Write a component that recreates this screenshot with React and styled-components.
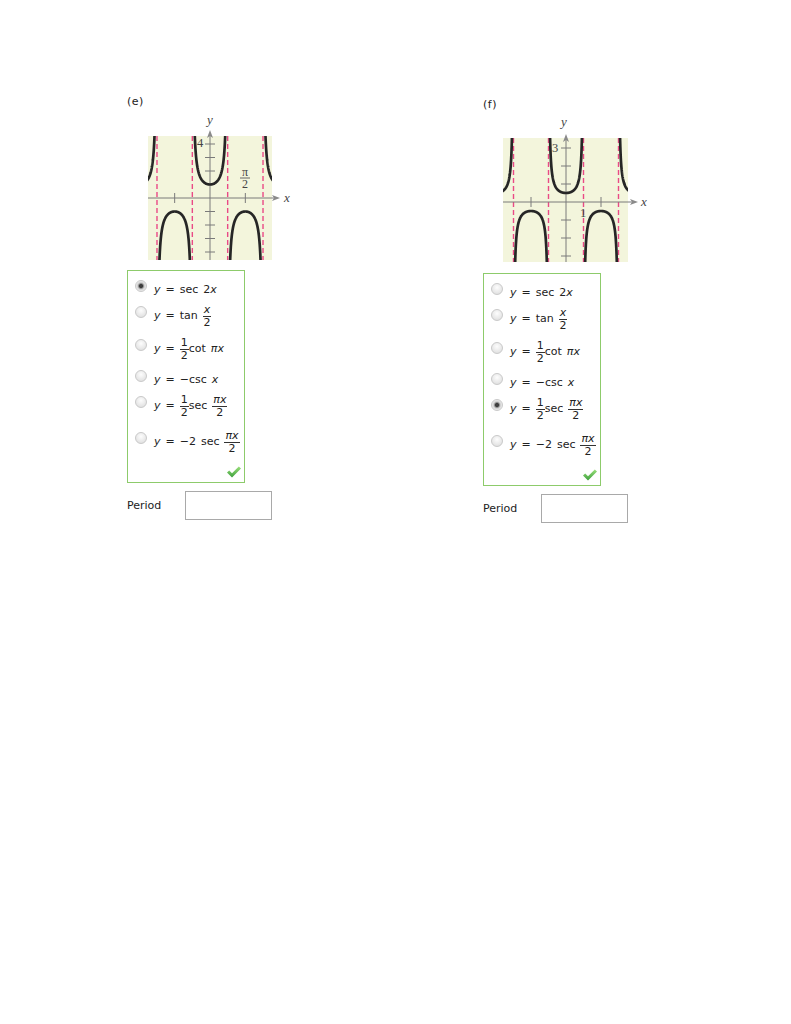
import React from "react";
import styled, { createGlobalStyle } from "styled-components";

const GlobalStyle = createGlobalStyle`
  body {
    margin: 0;
    background: #fff;
    font-family: "DejaVu Sans", Verdana, sans-serif;
    color: #222;
  }
`;

const Page = styled.div`
  display: grid;
  grid-template-columns: 356px 1fr;
  padding-left: 127px;
`;

const Column = styled.div`
  padding-top: ${(p) => p.$offset}px;
`;

const PartLabel = styled.div`
  font-size: 11px;
  line-height: 17px;
  height: 17px;
  letter-spacing: 0.5px;
`;

const GraphSvg = styled.svg`
  display: block;
  width: 170px;
  height: 150px;
  overflow: visible;
`;

const OptionsBox = styled.div`
  margin-top: 10px;
  width: 118px;
  height: 213px;
  box-sizing: border-box;
  border: 1px solid #8dcb6b;
  display: flex;
  flex-direction: column;
`;

const OptionRow = styled.label`
  display: flex;
  align-items: center;
  height: 24px;
  margin-top: ${(p) => p.$gap}px;
  padding-left: 7px;
  gap: 7px;
  font-size: 11px;
`;

const Radio = styled.span`
  flex: none;
  width: 12px;
  height: 12px;
  margin-bottom: 6px;
  box-sizing: border-box;
  border-radius: 50%;
  border: 1px solid #c9c9c9;
  background: ${(p) =>
    p.$checked
      ? "radial-gradient(circle, #3f3f3f 0 1.6px, #8a8a8a 2.4px, #cfcfcf 3.4px, #ececec 5px)"
      : "radial-gradient(circle at 50% 35%, #fdfdfd, #dadada)"};
`;

const Expr = styled.span`
  display: inline-flex;
  align-items: center;
  white-space: pre;
  line-height: 13px;
  word-spacing: 1.5px;
`;

const Var = styled.i`
  font-style: italic;
`;

const Frac = styled.span`
  display: inline-flex;
  flex-direction: column;
  align-items: center;
  line-height: 10px;
  margin-top: 3px;
`;

const Num = styled.span`
  padding: 0 1px 1px;
  border-bottom: 1px solid #333;
`;

const Den = styled.span`
  padding-top: 1px;
`;

const CheckRow = styled.div`
  display: flex;
  justify-content: flex-end;
  padding-right: 3px;
  margin-top: 13px;
`;

const PeriodRow = styled.div`
  display: flex;
  align-items: center;
  margin-top: 8px;
  font-size: 11px;
`;

const PeriodLabel = styled.span`
  width: 58px;
`;

const PeriodInput = styled.input`
  width: 87px;
  height: 29px;
  box-sizing: border-box;
  border: 1px solid #a9a9a9;
  margin: 0;
  padding: 0 4px;
  font: inherit;
`;

const SerifText = styled.text`
  font-family: "Liberation Serif", "Times New Roman", serif;
  fill: #444;
`;

function frac(n, d) {
  return (
    <Frac>
      <Num>{n}</Num>
      <Den>{d}</Den>
    </Frac>
  );
}

const options = [
  { id: "a", gap: 6, expr: <><Var>y</Var> = sec 2<Var>x</Var></> },
  { id: "b", gap: 2, expr: <><Var>y</Var> = tan {frac(<Var>x</Var>, "2")}</> },
  { id: "c", gap: 9, expr: <><Var>y</Var> = {frac("1", "2")}cot <Var>πx</Var></> },
  { id: "d", gap: 7, expr: <><Var>y</Var> = −csc <Var>x</Var></> },
  { id: "e", gap: 2, expr: <><Var>y</Var> = {frac("1", "2")}sec {frac(<Var>πx</Var>, "2")}</> },
  { id: "f", gap: 12, expr: <><Var>y</Var> = −2 sec {frac(<Var>πx</Var>, "2")}</> },
];

function buildCurves(spec) {
  const { box, origin, xu, yu, fn, asym } = spec;
  const xmin = (box.x - 4 - origin.x) / xu;
  const xmax = (box.x + box.w + 4 - origin.x) / xu;
  const lines = [];
  for (let k = -10; k <= 10; k++) {
    const a = asym.start + k * asym.step;
    if (a > xmin && a < xmax) lines.push(a);
  }
  const edges = [xmin, ...lines, xmax];
  const paths = [];
  for (let i = 0; i < edges.length - 1; i++) {
    const a = edges[i];
    const b = edges[i + 1];
    const pts = [];
    const N = 300;
    for (let j = 0; j < N; j++) {
      const t = a + ((b - a) * (j + 0.5)) / N;
      let Y = origin.y - fn(t) * yu;
      if (!isFinite(Y)) continue;
      Y = Math.max(box.y - 8, Math.min(box.y + box.h + 8, Y));
      pts.push(`${(origin.x + t * xu).toFixed(2)},${Y.toFixed(2)}`);
    }
    paths.push("M" + pts.join("L"));
  }
  return { paths, lines: lines.map((a) => origin.x + a * xu) };
}

const Graph = ({ spec }) => {
  const { id, box, origin, xu, yu, yTicks, xTicks, yTip, xTip, labels } = spec;
  const { paths, lines } = buildCurves(spec);
  return (
    <GraphSvg viewBox="0 0 170 150">
      <defs>
        <clipPath id={`clip-${id}`}>
          <rect x={box.x} y={box.y} width={box.w} height={box.h} />
        </clipPath>
      </defs>
      <rect x={box.x} y={box.y} width={box.w} height={box.h} fill="#f3f5dc" />
      <g clipPath={`url(#clip-${id})`}>
        {lines.map((x) => (
          <line key={x} x1={x} x2={x} y1={box.y} y2={box.y + box.h} stroke="#ea4a86" strokeWidth="1.4" strokeDasharray="5 3" />
        ))}
      </g>
      <g stroke="#7a7a7a" strokeWidth="1">
        <line x1={box.x} x2={xTip - 5} y1={origin.y} y2={origin.y} />
        <line x1={origin.x} x2={origin.x} y1={box.y + box.h} y2={yTip + 5} />
        {yTicks.map((v) => (
          <line key={v} x1={origin.x - 5} x2={origin.x + 5} y1={origin.y - v * yu} y2={origin.y - v * yu} />
        ))}
        {xTicks.map((v) => (
          <line key={v} x1={origin.x + v * xu} x2={origin.x + v * xu} y1={origin.y - 5} y2={origin.y + 5} />
        ))}
      </g>
      <polygon fill="#8a8a8a" points={`${xTip},${origin.y} ${xTip - 8},${origin.y - 3} ${xTip - 6},${origin.y} ${xTip - 8},${origin.y + 3}`} />
      <polygon fill="#8a8a8a" points={`${origin.x},${yTip} ${origin.x - 3},${yTip + 8} ${origin.x},${yTip + 6} ${origin.x + 3},${yTip + 8}`} />
      <g clipPath={`url(#clip-${id})`} fill="none" stroke="#262626" strokeWidth="2.7" strokeLinejoin="round">
        {paths.map((d, i) => (
          <path key={i} d={d} />
        ))}
      </g>
      <SerifText x={labels.y[0]} y={labels.y[1]} fontSize="13" fontStyle="italic" textAnchor="middle" dominantBaseline="central">y</SerifText>
      <SerifText x={labels.x[0]} y={labels.x[1]} fontSize="13" fontStyle="italic" textAnchor="middle" dominantBaseline="central">x</SerifText>
      {labels.nums.map((n) => (
        <SerifText key={n.t} x={n.x} y={n.y} fontSize="12.5" textAnchor="middle" dominantBaseline="central">{n.t}</SerifText>
      ))}
      {labels.pi && (
        <g>
          <SerifText x={labels.pi[0]} y={labels.pi[1] - 6} fontSize="12" textAnchor="middle" dominantBaseline="central">π</SerifText>
          <line x1={labels.pi[0] - 5} x2={labels.pi[0] + 5} y1={labels.pi[1]} y2={labels.pi[1]} stroke="#555" strokeWidth="0.9" />
          <SerifText x={labels.pi[0]} y={labels.pi[1] + 6} fontSize="12" textAnchor="middle" dominantBaseline="central">2</SerifText>
        </g>
      )}
    </GraphSvg>
  );
};

const CheckIcon = () => (
  <svg width="14" height="12" viewBox="0 0 14 12">
    <defs>
      <linearGradient id="chk" x1="0" y1="0" x2="0" y2="1">
        <stop offset="0" stopColor="#9be07b" />
        <stop offset="1" stopColor="#3c9f3c" />
      </linearGradient>
    </defs>
    <polygon points="0,6.6 2.2,4.4 5,7.2 11.8,0.4 14,2.6 5,11.6" fill="url(#chk)" />
  </svg>
);

const parts = [
  {
    label: "(e)",
    offset: 93,
    selected: "a",
    graph: {
      id: "e",
      box: { x: 21, y: 26, w: 124, h: 124 },
      origin: { x: 83, y: 88 },
      xu: 22.5,
      yu: 13.5,
      fn: (x) => 1 / Math.cos(2 * x),
      asym: { start: Math.PI / 4, step: Math.PI / 2 },
      yTicks: [-4, -3, -2, -1, 1, 2, 3, 4],
      xTicks: [-Math.PI / 2, Math.PI / 2],
      yTip: 20,
      xTip: 153,
      labels: {
        y: [83, 9],
        x: [160, 87],
        nums: [{ t: "4", x: 73, y: 33 }],
        pi: [118, 68],
      },
    },
  },
  {
    label: "(f)",
    offset: 96,
    selected: "e",
    graph: {
      id: "f",
      box: { x: 20, y: 25, w: 125, h: 124 },
      origin: { x: 83, y: 89 },
      xu: 17.5,
      yu: 18,
      fn: (x) => 0.5 / Math.cos((Math.PI * x) / 2),
      asym: { start: 1, step: 2 },
      yTicks: [-3, -2, -1, 1, 2, 3],
      xTicks: [-2, 2],
      yTip: 21,
      xTip: 155,
      labels: {
        y: [81, 8],
        x: [161, 88],
        nums: [
          { t: "3", x: 72, y: 35 },
          { t: "1", x: 100, y: 100 },
        ],
      },
    },
  },
];

const App = () => {
  return (
    <>
      <GlobalStyle />
      <Page>
        {parts.map((part) => (
          <Column key={part.label} $offset={part.offset}>
            <PartLabel>{part.label}</PartLabel>
            <Graph spec={part.graph} />
            <OptionsBox>
              {options.map((opt) => (
                <OptionRow key={opt.id} $gap={opt.gap}>
                  <Radio $checked={opt.id === part.selected} />
                  <Expr>{opt.expr}</Expr>
                </OptionRow>
              ))}
              <CheckRow>
                <CheckIcon />
              </CheckRow>
            </OptionsBox>
            <PeriodRow>
              <PeriodLabel>Period</PeriodLabel>
              <PeriodInput type="text" />
            </PeriodRow>
          </Column>
        ))}
      </Page>
    </>
  );
};

export default App;
